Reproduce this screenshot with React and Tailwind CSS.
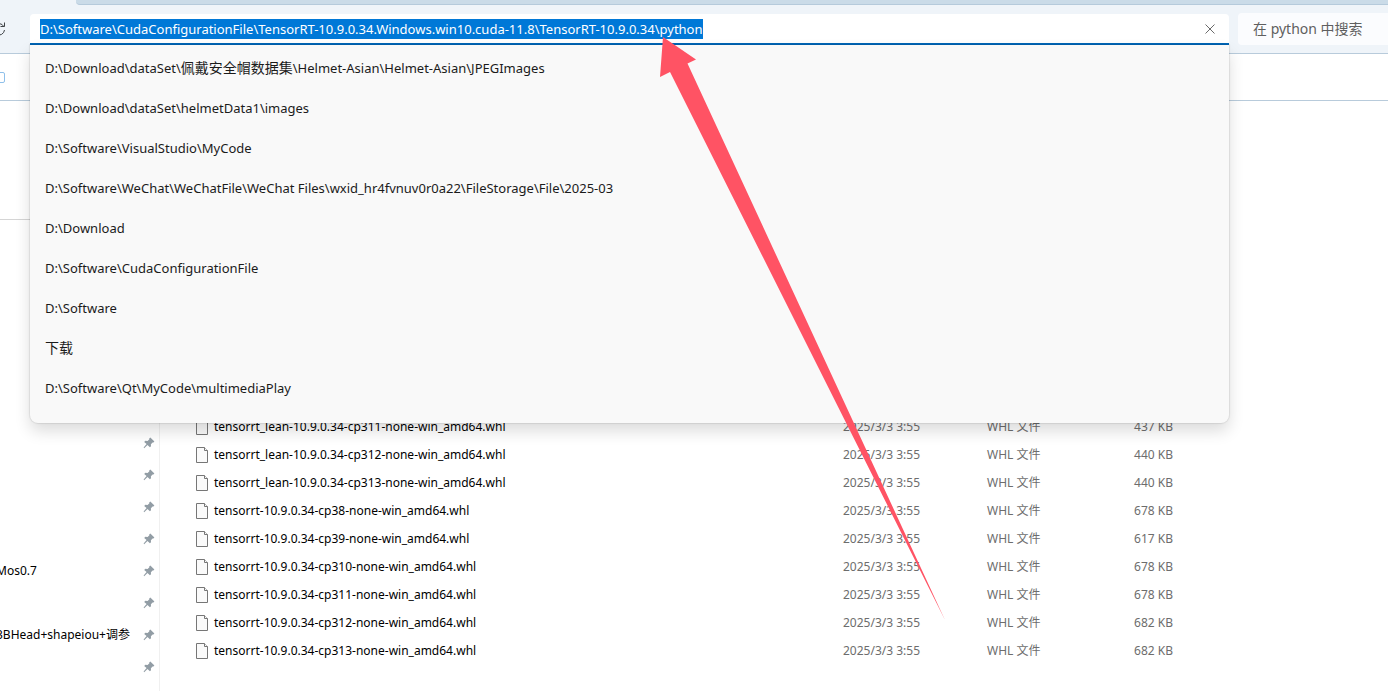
import React, { useEffect, useRef } from 'react';

const history = [
  'D:\\Download\\dataSet\\佩戴安全帽数据集\\Helmet-Asian\\Helmet-Asian\\JPEGImages',
  'D:\\Download\\dataSet\\helmetData1\\images',
  'D:\\Software\\VisualStudio\\MyCode',
  'D:\\Software\\WeChat\\WeChatFile\\WeChat Files\\wxid_hr4fvnuv0r0a22\\FileStorage\\File\\2025-03',
  'D:\\Download',
  'D:\\Software\\CudaConfigurationFile',
  'D:\\Software',
  '下载',
  'D:\\Software\\Qt\\MyCode\\multimediaPlay',
];

const files = [
  { name: 'tensorrt_lean-10.9.0.34-cp311-none-win_amd64.whl', size: '437 KB' },
  { name: 'tensorrt_lean-10.9.0.34-cp312-none-win_amd64.whl', size: '440 KB' },
  { name: 'tensorrt_lean-10.9.0.34-cp313-none-win_amd64.whl', size: '440 KB' },
  { name: 'tensorrt-10.9.0.34-cp38-none-win_amd64.whl', size: '678 KB' },
  { name: 'tensorrt-10.9.0.34-cp39-none-win_amd64.whl', size: '617 KB' },
  { name: 'tensorrt-10.9.0.34-cp310-none-win_amd64.whl', size: '678 KB' },
  { name: 'tensorrt-10.9.0.34-cp311-none-win_amd64.whl', size: '678 KB' },
  { name: 'tensorrt-10.9.0.34-cp312-none-win_amd64.whl', size: '682 KB' },
  { name: 'tensorrt-10.9.0.34-cp313-none-win_amd64.whl', size: '682 KB' },
];

const pinned = ['', '', '', '', 'Mos0.7', '', '3BHead+shapeiou+调参', ''];

function RefreshIcon() {
  return (
    <svg viewBox="0 0 14 14" className="h-[14px] w-[14px]" fill="none" stroke="#3f4347" strokeWidth="1">
      <path d="M11.8 4.5A5.8 5.8 0 1 0 12.5 8" />
      <path d="M12.5 0.5V4.5H8.5" />
    </svg>
  );
}

function PinIcon() {
  return (
    <svg viewBox="0 0 12 12" className="h-3 w-3 shrink-0" fill="#929da5">
      <path d="M7.3 0.6 11.4 4.4 10.4 5.6 9.6 5.4 7.9 7.2 8 9.2 6.9 10.3 4.5 7.9 1.2 11.2 0.6 10.6 3.6 7 1.2 4.9 2.3 3.8 4.6 4 6.4 2.3 6.2 1.5Z" />
    </svg>
  );
}

function FileIcon() {
  return (
    <svg viewBox="0 0 12 16" className="h-4 w-3 shrink-0" fill="#fafafa" stroke="#767676" strokeWidth="1">
      <path d="M0.5 0.5H8.5L11.5 3.5V15.5H0.5Z" />
      <path d="M8.5 0.5V3.5H11.5" />
    </svg>
  );
}

// Chinese runs are set one step larger than the latin text around them
function PathText({ path }) {
  return (
    <span>
      {path.split(/([\u4e00-\u9fff]+)/).map((part, i) => (
        i % 2 ? <span key={i} className="text-sm leading-none">{part}</span> : part
      ))}
    </span>
  );
}

function AddressBar() {
  const inputRef = useRef(null);

  useEffect(() => {
    inputRef.current.focus();
    inputRef.current.select();
  }, []);

  return (
    <div className="relative z-20 mt-px w-[1199px] min-w-0 shrink">
      <div className="flex h-[31px] items-center rounded-t border-b-2 border-[#0067b8] bg-white pt-px pr-[11px] pl-[10px]">
        <input
          ref={inputRef}
          type="text"
          aria-label="地址"
          spellCheck={false}
          defaultValue={'D:\\Software\\CudaConfigurationFile\\TensorRT-10.9.0.34.Windows.win10.cuda-11.8\\TensorRT-10.9.0.34\\python'}
          className="h-5 min-w-0 flex-1 bg-transparent text-[13px] leading-5 text-black caret-transparent outline-none selection:bg-[#0078d7] selection:text-white"
        />
        <button aria-label="关闭" className="flex h-4 w-4 items-center justify-center">
          <svg viewBox="0 0 10 10" className="h-[10px] w-[10px]" fill="none" stroke="#6a6a6a" strokeWidth="1">
            <path d="M0.5 0.5 9.5 9.5M9.5 0.5 0.5 9.5" />
          </svg>
        </button>
      </div>
      <ul className="absolute inset-x-0 top-full h-[378px] rounded-b-lg bg-[#f9f9f9] pt-1 text-[#1b1b1b] shadow-[0_0_1px_1px_rgba(0,0,0,0.08),0_8px_16px_rgba(0,0,0,0.14)]">
        {history.map((path) => (
          <li key={path} className="flex h-10 items-center px-[15px] text-[13px]">
            <PathText path={path} />
          </li>
        ))}
      </ul>
    </div>
  );
}

function Sidebar() {
  return (
    <aside className="w-40 shrink-0 overflow-hidden border-r border-[#f0f0f0]">
      <div className="h-[119px] border-b border-[#d5d5d5]" />
      <ul className="mt-[207px] pr-1 text-xs">
        {pinned.map((label, i) => (
          <li key={i} className="-ml-1 flex h-8 items-center justify-between whitespace-nowrap">
            <span>{label}</span>
            <PinIcon />
          </li>
        ))}
      </ul>
    </aside>
  );
}

function FileTable() {
  return (
    <div className="min-w-0 flex-1 overflow-hidden pt-[312px]">
      <table className="w-full table-fixed text-xs text-[#6d6d6d]">
        <colgroup>
          <col className="w-[683px]" />
          <col className="w-36" />
          <col className="w-[100px]" />
          <col className="w-[86px]" />
          <col />
        </colgroup>
        <tbody>
          {files.map((file) => (
            <tr key={file.name} className="h-7">
              <td className="p-0 pl-9">
                <div className="flex items-center gap-[6px] text-black">
                  <FileIcon />
                  {file.name}
                </div>
              </td>
              <td className="p-0">2025/3/3 3:55</td>
              <td className="p-0">WHL 文件</td>
              <td className="p-0 text-right">{file.size}</td>
              <td className="p-0" />
            </tr>
          ))}
        </tbody>
      </table>
    </div>
  );
}

export default function App() {
  return (
    <div className="relative flex min-h-screen flex-col overflow-hidden bg-white font-['Noto_Sans','Noto_Sans_CJK_SC',sans-serif] text-black">
      <header className="border-b border-[#b8cbdb] bg-[#eff4f9]">
        <div className="ml-[76px] h-[5px] rounded-bl border-b border-[#b5cadb] bg-[#cadbe8]" />
        <div className="flex h-12 items-center">
          <button aria-label="刷新" className="-ml-2 mr-6 shrink-0">
            <RefreshIcon />
          </button>
          <AddressBar />
          <input
            type="search"
            aria-label="搜索"
            placeholder="在 python 中搜索"
            className="ml-[9px] h-8 min-w-0 flex-1 rounded-l bg-[#fbfcfe] pb-0.5 pl-[15px] text-sm text-[#5f5f5f] outline-none placeholder:text-[#5f5f5f]"
          />
        </div>
      </header>

      <div className="flex h-[47px] items-center border-b border-[#b8cbdb]">
        <button aria-label="新建" className="-ml-3 h-[11px] w-[17px] rounded-xs border border-[#8fc0ea]" />
      </div>

      <main className="flex flex-1">
        <Sidebar />
        <FileTable />
      </main>

      {/* arrow pointing at the end of the path */}
      <svg viewBox="0 0 286 584" className="pointer-events-none absolute top-[37px] left-[660px] z-30 h-[584px] w-[286px]">
        <path d="M3 0 36 22.5 27.5 26.5 285 583 10 35 0 40Z" fill="#ff5364" />
      </svg>
    </div>
  );
}
